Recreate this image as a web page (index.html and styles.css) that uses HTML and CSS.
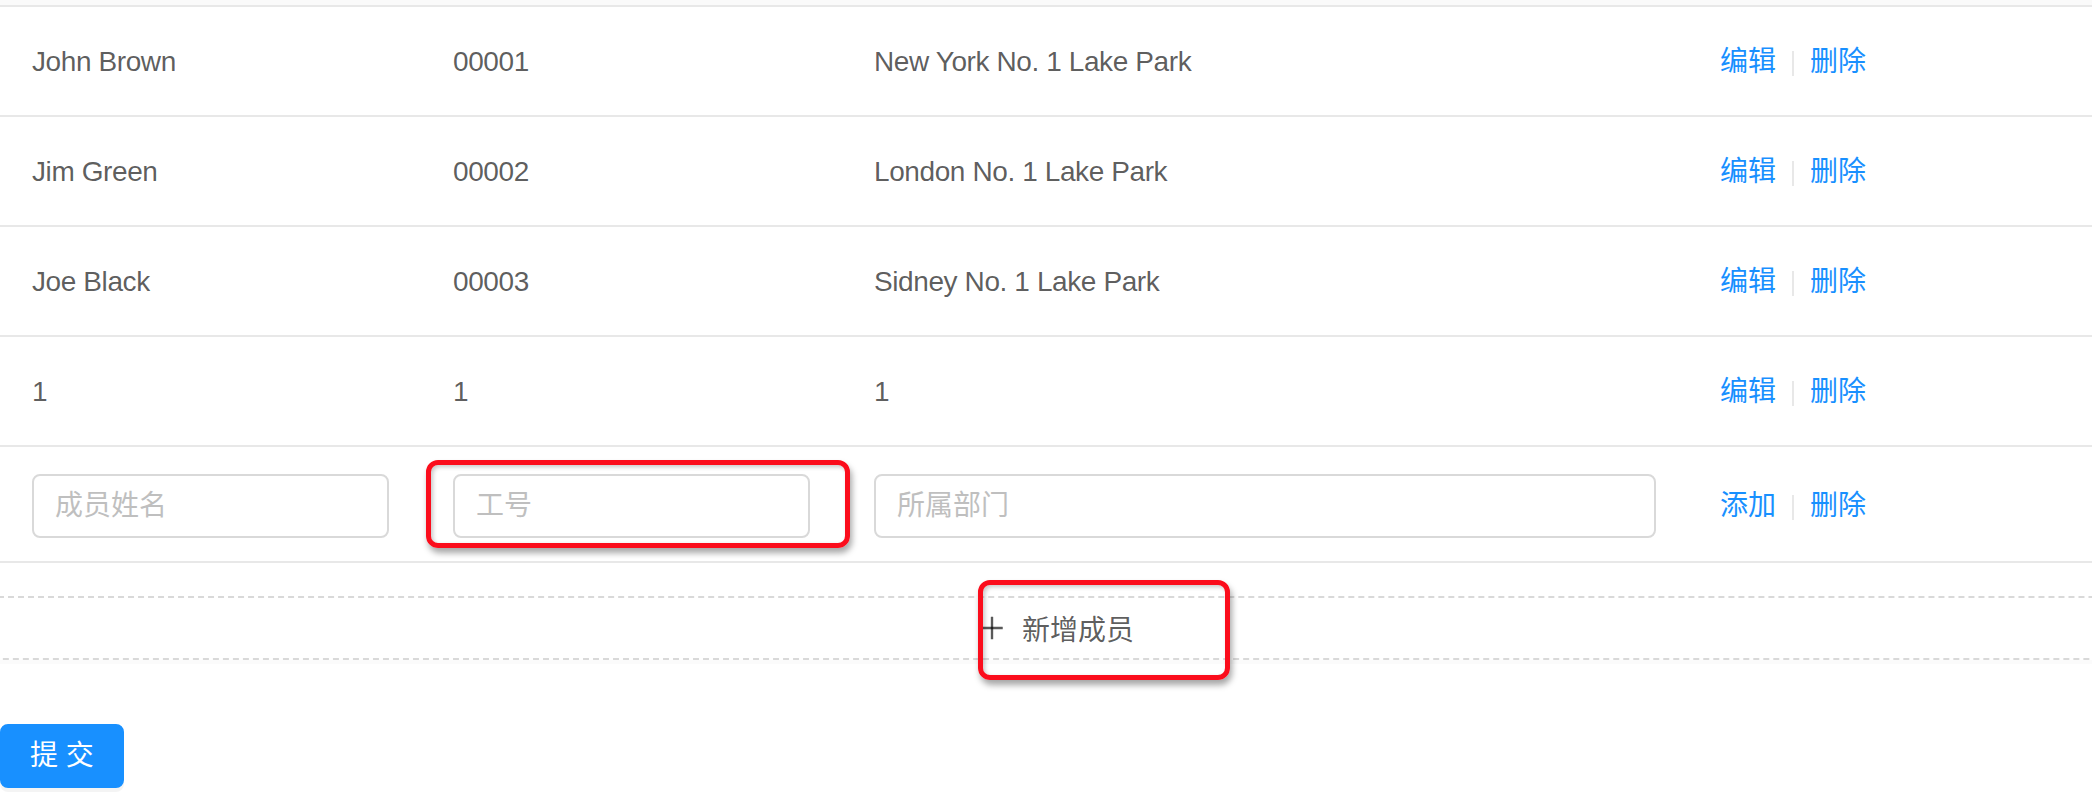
FILE: index.html
```html
<!DOCTYPE html>
<html lang="zh-CN">
<head>
<meta charset="utf-8">
<title>成员管理</title>
<link rel="stylesheet" href="styles.css">
</head>
<body>
<div class="page">
  <table class="member-table">
    <colgroup>
      <col class="col-name">
      <col class="col-id">
      <col class="col-dept">
      <col class="col-action">
    </colgroup>
    <thead>
      <tr><th></th><th></th><th></th><th></th></tr>
    </thead>
    <tbody>
      <tr>
        <td>John Brown</td>
        <td>00001</td>
        <td>New York No. 1 Lake Park</td>
        <td class="actions"><a class="link">编辑</a><i class="divider"></i><a class="link">删除</a></td>
      </tr>
      <tr>
        <td>Jim Green</td>
        <td>00002</td>
        <td>London No. 1 Lake Park</td>
        <td class="actions"><a class="link">编辑</a><i class="divider"></i><a class="link">删除</a></td>
      </tr>
      <tr>
        <td>Joe Black</td>
        <td>00003</td>
        <td>Sidney No. 1 Lake Park</td>
        <td class="actions"><a class="link">编辑</a><i class="divider"></i><a class="link">删除</a></td>
      </tr>
      <tr>
        <td>1</td>
        <td>1</td>
        <td>1</td>
        <td class="actions"><a class="link">编辑</a><i class="divider"></i><a class="link">删除</a></td>
      </tr>
      <tr class="edit-row">
        <td><input class="field" type="text" placeholder="成员姓名"></td>
        <td><input class="field" type="text" placeholder="工号"></td>
        <td><input class="field" type="text" placeholder="所属部门"></td>
        <td class="actions"><a class="link">添加</a><i class="divider"></i><a class="link">删除</a></td>
      </tr>
    </tbody>
  </table>

  <button class="btn-dashed" type="button">
    <svg class="icon-plus" viewBox="64 64 896 896" width="28" height="28" aria-hidden="true">
      <path d="M482 152h60q8 0 8 8v704q0 8-8 8h-60q-8 0-8-8V160q0-8 8-8z"/>
      <path d="M176 474h672q8 0 8 8v60q0 8-8 8H176q-8 0-8-8v-60q0-8 8-8z"/>
    </svg>
    <span>新增成员</span>
  </button>

  <button class="btn-primary" type="button"><span>提 交</span></button>

  <div class="mark mark-id"></div>
  <div class="mark mark-add"></div>
</div>
</body>
</html>
```

FILE: styles.css
```css
html, body {
  margin: 0;
  padding: 0;
  background: #fff;
  overflow: hidden;
}

body {
  font-family: "Liberation Sans", "Noto Sans CJK SC", sans-serif;
  font-size: 28px;
  color: rgba(0, 0, 0, 0.65);
}

.page {
  position: relative;
  width: 2110px;
  height: 812px;
}

.member-table {
  width: 2110px;
  border-collapse: collapse;
  table-layout: fixed;
}

.col-name,
.col-id {
  width: 421px;
}

.col-dept {
  width: 846px;
}

.member-table th {
  height: 5px;
  padding: 0;
  font-size: 0;
  line-height: 0;
  background: #fafafa;
  border-bottom: 2px solid #e8e8e8;
}

.member-table td {
  padding: 33px 32px 31px;
  line-height: 44px;
  letter-spacing: -0.4px;
  text-align: left;
  white-space: nowrap;
  border-bottom: 2px solid #e8e8e8;
  vertical-align: middle;
}

.member-table td.actions {
  letter-spacing: 0;
}

.member-table .edit-row td {
  padding: 27px 32px 23px;
}

.link {
  color: #1890ff;
  cursor: pointer;
}

.divider {
  display: inline-block;
  width: 2px;
  height: 25px;
  margin: 0 16px;
  background: #e8e8e8;
  vertical-align: middle;
}

.field {
  display: block;
  box-sizing: border-box;
  width: 100%;
  height: 64px;
  padding: 0 21px;
  margin: 0;
  border: 2px solid #d9d9d9;
  border-radius: 8px;
  background: #fff;
  font: inherit;
  font-size: 28px;
  letter-spacing: 0;
  color: rgba(0, 0, 0, 0.65);
  outline: none;
}

.field::placeholder {
  color: #bfbfbf;
}

.btn-dashed {
  display: flex;
  align-items: center;
  justify-content: center;
  gap: 16px;
  box-sizing: border-box;
  width: calc(100% + 22px);
  height: 64px;
  margin: 33px -12px 0 -10px;
  padding: 0 30px;
  border: 2px dashed #d9d9d9;
  border-radius: 8px;
  background: #fff;
  box-shadow: 0 4px 0 rgba(0, 0, 0, 0.015);
  font: inherit;
  font-size: 28px;
  color: rgba(0, 0, 0, 0.65);
}

.icon-plus {
  display: block;
  fill: rgba(0, 0, 0, 0.65);
}

.btn-primary {
  display: block;
  box-sizing: border-box;
  height: 64px;
  margin: 64px 0 0 0;
  padding: 0 28px;
  border: 2px solid #1890ff;
  border-radius: 8px;
  background: #1890ff;
  box-shadow: 0 4px 0 rgba(0, 0, 0, 0.045);
  font: inherit;
  font-size: 28px;
  line-height: 60px;
  color: #fff;
}

.mark {
  position: absolute;
  box-sizing: border-box;
  border: 5px solid #fb0d1c;
  border-radius: 12px;
  box-shadow: 2px 5px 6px rgba(0, 0, 0, 0.35), inset 2px 2px 4px rgba(0, 0, 0, 0.22);
  pointer-events: none;
}

.mark-id {
  left: 426px;
  top: 460px;
  width: 424px;
  height: 88px;
}

.mark-add {
  left: 978px;
  top: 580px;
  width: 252px;
  height: 100px;
}
```
